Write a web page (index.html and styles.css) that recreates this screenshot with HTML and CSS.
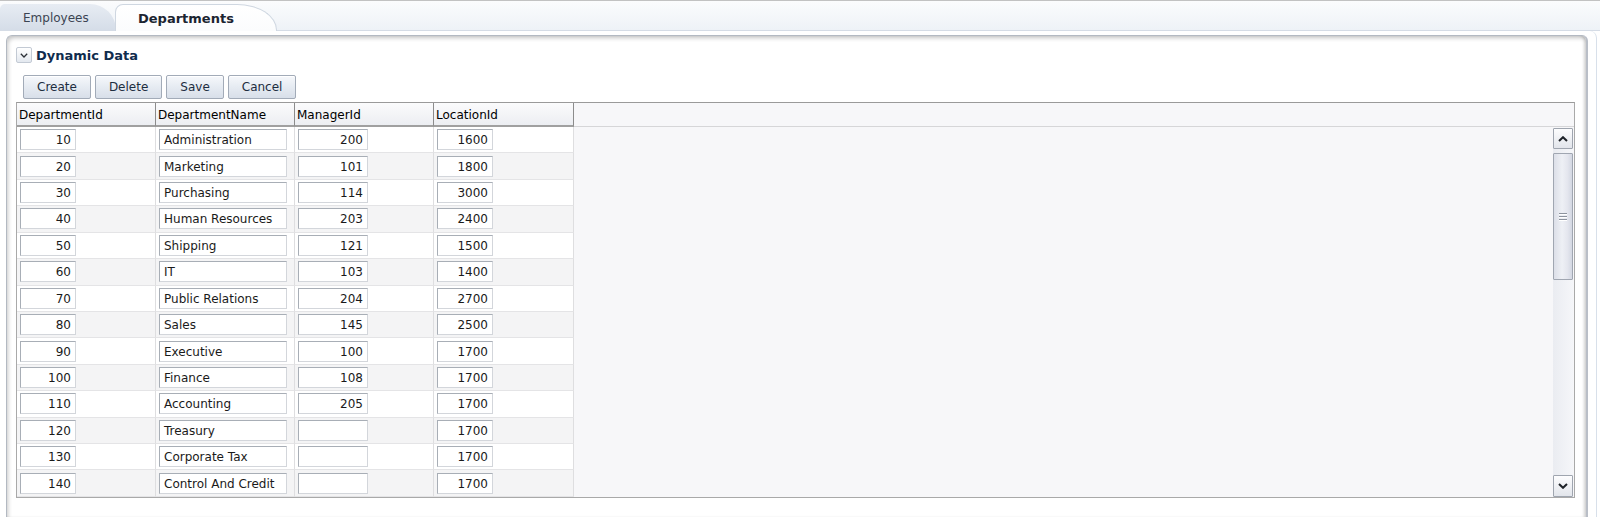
FILE: index.html
```html
<!DOCTYPE html>
<html>
<head>
<meta charset="utf-8">
<title>Departments</title>
<link rel="stylesheet" href="styles.css">
</head>
<body>
<div class="tabbar">
  <div class="tab tab-inactive">Employees</div>
  <div class="tab tab-active">Departments</div>
</div>
<div class="frame">
  <div class="panel">
    <div class="panel-head">
      <span class="disclose"><svg width="8" height="5" viewBox="0 0 8 5"><polyline points="0.8,0.8 4,4 7.2,0.8" fill="none" stroke="#2b2f36" stroke-width="1.3"/></svg></span>
      <span class="title">Dynamic Data</span>
    </div>
    <div class="toolbar">
      <button class="btn">Create</button>
      <button class="btn">Delete</button>
      <button class="btn">Save</button>
      <button class="btn">Cancel</button>
    </div>
    <div class="grid">
      <div class="grid-head">
        <div class="hcell">DepartmentId</div>
        <div class="hcell">DepartmentName</div>
        <div class="hcell">ManagerId</div>
        <div class="hcell last">LocationId</div>
      </div>
      <div class="grid-body">
        <div class="rows">
          <div class="row"><div class="cell"><span class="fld num w1">10</span></div><div class="cell"><span class="fld w2">Administration</span></div><div class="cell"><span class="fld num w3">200</span></div><div class="cell last"><span class="fld num w1">1600</span></div></div>
          <div class="row"><div class="cell"><span class="fld num w1">20</span></div><div class="cell"><span class="fld w2">Marketing</span></div><div class="cell"><span class="fld num w3">101</span></div><div class="cell last"><span class="fld num w1">1800</span></div></div>
          <div class="row"><div class="cell"><span class="fld num w1">30</span></div><div class="cell"><span class="fld w2">Purchasing</span></div><div class="cell"><span class="fld num w3">114</span></div><div class="cell last"><span class="fld num w1">3000</span></div></div>
          <div class="row"><div class="cell"><span class="fld num w1">40</span></div><div class="cell"><span class="fld w2">Human Resources</span></div><div class="cell"><span class="fld num w3">203</span></div><div class="cell last"><span class="fld num w1">2400</span></div></div>
          <div class="row"><div class="cell"><span class="fld num w1">50</span></div><div class="cell"><span class="fld w2">Shipping</span></div><div class="cell"><span class="fld num w3">121</span></div><div class="cell last"><span class="fld num w1">1500</span></div></div>
          <div class="row"><div class="cell"><span class="fld num w1">60</span></div><div class="cell"><span class="fld w2">IT</span></div><div class="cell"><span class="fld num w3">103</span></div><div class="cell last"><span class="fld num w1">1400</span></div></div>
          <div class="row"><div class="cell"><span class="fld num w1">70</span></div><div class="cell"><span class="fld w2">Public Relations</span></div><div class="cell"><span class="fld num w3">204</span></div><div class="cell last"><span class="fld num w1">2700</span></div></div>
          <div class="row"><div class="cell"><span class="fld num w1">80</span></div><div class="cell"><span class="fld w2">Sales</span></div><div class="cell"><span class="fld num w3">145</span></div><div class="cell last"><span class="fld num w1">2500</span></div></div>
          <div class="row"><div class="cell"><span class="fld num w1">90</span></div><div class="cell"><span class="fld w2">Executive</span></div><div class="cell"><span class="fld num w3">100</span></div><div class="cell last"><span class="fld num w1">1700</span></div></div>
          <div class="row"><div class="cell"><span class="fld num w1">100</span></div><div class="cell"><span class="fld w2">Finance</span></div><div class="cell"><span class="fld num w3">108</span></div><div class="cell last"><span class="fld num w1">1700</span></div></div>
          <div class="row"><div class="cell"><span class="fld num w1">110</span></div><div class="cell"><span class="fld w2">Accounting</span></div><div class="cell"><span class="fld num w3">205</span></div><div class="cell last"><span class="fld num w1">1700</span></div></div>
          <div class="row"><div class="cell"><span class="fld num w1">120</span></div><div class="cell"><span class="fld w2">Treasury</span></div><div class="cell"><span class="fld num w3"></span></div><div class="cell last"><span class="fld num w1">1700</span></div></div>
          <div class="row"><div class="cell"><span class="fld num w1">130</span></div><div class="cell"><span class="fld w2">Corporate Tax</span></div><div class="cell"><span class="fld num w3"></span></div><div class="cell last"><span class="fld num w1">1700</span></div></div>
          <div class="row"><div class="cell"><span class="fld num w1">140</span></div><div class="cell"><span class="fld w2">Control And Credit</span></div><div class="cell"><span class="fld num w3"></span></div><div class="cell last"><span class="fld num w1">1700</span></div></div>
        </div>
        <div class="vscroll">
          <div class="sb-btn"><svg width="10" height="6" viewBox="0 0 10 6"><polyline points="1,5 5,1.2 9,5" fill="none" stroke="#1e2228" stroke-width="2"/></svg></div>
          <div class="sb-thumb"><span class="grip"></span><span class="grip"></span><span class="grip"></span></div>
          <div class="sb-track"></div>
          <div class="sb-btn down"><svg width="10" height="6" viewBox="0 0 10 6"><polyline points="1,1 5,4.8 9,1" fill="none" stroke="#1e2228" stroke-width="2"/></svg></div>
        </div>
      </div>
    </div>
  </div>
</div>
</body>
</html>
```

FILE: styles.css
```css
* { box-sizing: border-box; }
html, body { margin: 0; padding: 0; }
body {
  width: 1600px;
  height: 517px;
  overflow: hidden;
  background: #ffffff;
  font-family: "DejaVu Sans", sans-serif;
  font-size: 12px;
  color: #000;
}

/* ---------- tab strip ---------- */
.tabbar {
  height: 31px;
  border-top: 1px solid #c2c2c2;
  border-bottom: 1px solid #d5dce6;
  background: linear-gradient(#fbfcfd, #eef2f7);
  display: flex;
  align-items: flex-end;
}
.tab {
  height: 26px;
  display: flex;
  align-items: center;
}
.tab-inactive {
  width: 116px;
  padding-left: 23px;
  padding-top: 1px;
  color: #3b4452;
  background: linear-gradient(#e7ecf3, #d5dde8);
  border-top-left-radius: 5px;
  border-top-right-radius: 26px 26px;
}
.tab-active {
  width: 162px;
  margin-left: -1px;
  padding-left: 22px;
  padding-top: 1px;
  font-size: 13px;
  font-weight: bold;
  color: #1b2531;
  background: linear-gradient(#ffffff, #fbfcfd);
  border: 1px solid #cfd7e1;
  border-bottom: none;
  border-top-left-radius: 8px;
  border-top-right-radius: 40px 26px;
  height: 27px;
  margin-bottom: -1px;
}

/* ---------- panel ---------- */
.frame {
  width: 1597px;
  height: 486px;
  padding: 4px 8px 0 6px;
  border-right: 1px solid #d8e0ea;
  border-top-right-radius: 7px;
}
.panel {
  height: 100%;
  border: 1px solid #b3b9c2;
  border-bottom: none;
  border-right: 2px solid #b9bec7;
  border-radius: 6px 6px 0 0;
  background: #ffffff;
  box-shadow: inset 2px 3px 4px -1px rgba(0, 0, 0, 0.22), inset -3px 0 3px -1px rgba(0, 0, 0, 0.18);
  padding: 11px 9px 0 9px;
}
.panel-head {
  height: 16px;
  display: flex;
  align-items: center;
  gap: 4px;
}
.disclose {
  width: 16px;
  height: 16px;
  border: 1px solid #c3cad4;
  border-radius: 2px;
  background: linear-gradient(#ffffff, #e3e8ef);
  display: flex;
  align-items: center;
  justify-content: center;
  padding-top: 1px;
}
.title {
  font-size: 13px;
  font-weight: bold;
  color: #0f2c4d;
}

.toolbar {
  margin-top: 12px;
  padding-left: 7px;
  display: flex;
  gap: 4px;
}
.btn {
  height: 24px;
  padding: 0 13px;
  font: inherit;
  font-size: 12px;
  color: #1d2d40;
  border: 1px solid #a2abb8;
  border-radius: 2px;
  background: linear-gradient(#f6f8fb, #e6ebf2 50%, #d8dfe9);
  box-shadow: inset 0 1px 0 #ffffff;
}

/* ---------- grid ---------- */
.grid {
  margin-top: 3px;
  width: 1559px;
  border: 1px solid #a9a9a9;
  border-top-color: #9a9a9a;
  background: #f7f7f9;
}
.grid-head {
  height: 24px;
  display: flex;
  border-bottom: 1px solid #d6d6d8;
}
.hcell {
  width: 139px;
  height: 24px;
  padding-left: 2px;
  display: flex;
  align-items: center;
  background: linear-gradient(#fbfbfc, #eceef2);
  border-right: 1px solid #8c8c8c;
  border-bottom: 2px solid #a0a0a0;
  padding-top: 2px;
}
.hcell.last { width: 140px; }

.grid-body {
  display: flex;
  height: 370px;
}
.rows { width: 557px; }
.row {
  height: 26.43px;
  display: flex;
  background: #ffffff;
}
.row:nth-child(even) { background: #f4f4f5; }
.cell {
  width: 139px;
  height: 100%;
  padding-left: 3px;
  display: flex;
  align-items: center;
  border-right: 1px solid #dedee0;
  border-bottom: 1px solid #e4e4e6;
}
.cell.last { width: 140px; padding-left: 3px; }
.fld {
  height: 21px;
  line-height: 19px;
  padding: 1px 4px 0;
  background: #ffffff;
  border: 1px solid;
  border-color: #a8aeb6 #d3d6db #d3d6db #a8aeb6;
  white-space: nowrap;
  overflow: hidden;
  color: #1a1a1a;
}
.fld.num { text-align: right; }
.w1 { width: 56px; }
.w2 { width: 128px; }
.w3 { width: 70px; }

/* ---------- scrollbar ---------- */
.vscroll {
  margin: 1px 1px 0 auto;
  width: 20px;
  display: flex;
  flex-direction: column;
  background: linear-gradient(90deg, #eaecf1, #f5f6f9);
}
.sb-btn {
  height: 21px;
  border: 1px solid #9fa5af;
  border-radius: 1px;
  background: linear-gradient(#fdfdfe, #e2e5eb);
  display: flex;
  align-items: center;
  justify-content: center;
}
.sb-btn.down { height: 22px; }
.sb-thumb {
  margin-top: 4px;
  height: 127px;
  border: 1px solid #a0a6b1;
  border-radius: 1px;
  background: linear-gradient(90deg, #dcdfe8, #eef0f5 45%, #e4e6ee 75%, #d3d7e2);
  display: flex;
  flex-direction: column;
  align-items: center;
  justify-content: center;
  gap: 2px;
}
.grip {
  width: 8px;
  height: 1px;
  background: #8d939e;
  box-shadow: 0 1px 0 #ffffff;
}
.sb-track { flex: 1; }
```
